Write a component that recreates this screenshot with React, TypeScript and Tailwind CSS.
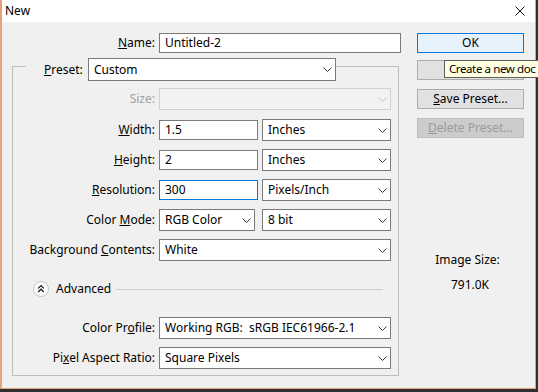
import React from "react";

function Chevron({ light }: { light?: boolean }) {
  return (
    <svg width="9" height="5" viewBox="0 0 9 5" className="shrink-0">
      <polyline
        points="0.5,0.5 4.5,4.5 8.5,0.5"
        fill="none"
        stroke={light ? "#c4c4c4" : "#3a3a3a"}
        strokeWidth="1"
      />
    </svg>
  );
}

function Select({
  className,
  children,
  disabled,
}: {
  className: string;
  children?: React.ReactNode;
  disabled?: boolean;
}) {
  return (
    <div
      className={
        "h-[22px] flex items-center justify-between pl-[5px] pr-[3px] border " +
        (disabled ? "bg-[#f2f2f2] border-[#d2d2d2] " : "bg-white border-[#7a7a7a] ") +
        className
      }
    >
      <span className="whitespace-nowrap">{children}</span>
      <Chevron light={disabled} />
    </div>
  );
}

function Input({
  className,
  children,
  focused,
}: {
  className: string;
  children?: React.ReactNode;
  focused?: boolean;
}) {
  return (
    <div
      className={
        "h-[20px] flex items-center pl-[5px] bg-white border " +
        (focused ? "border-[#0078d7] " : "border-[#7a7a7a] ") +
        className
      }
    >
      <span className="whitespace-nowrap">{children}</span>
    </div>
  );
}

function Label({ children, disabled }: { children: React.ReactNode; disabled?: boolean }) {
  return (
    <div
      className={
        "w-[142px] text-right whitespace-nowrap " + (disabled ? "text-[#a2a2a2]" : "text-black")
      }
    >
      {children}
    </div>
  );
}

function Btn({
  children,
  kind,
  className,
}: {
  children?: React.ReactNode;
  kind: "default" | "normal" | "disabled";
  className: string;
}) {
  const cls =
    kind === "default"
      ? "bg-[#e5f1fb] border-[#0078d7] text-black"
      : kind === "normal"
      ? "bg-[#e1e1e1] border-[#adadad] text-black"
      : "bg-[#cccccc] border-[#bfbfbf] text-[#9a9a9a]";
  return (
    <div
      className={
        "h-[20px] w-[107px] border flex items-center justify-center whitespace-nowrap " +
        cls +
        " " +
        className
      }
    >
      {children}
    </div>
  );
}

export default function App() {
  return (
    <div className="relative w-[538px] h-[392px] overflow-hidden bg-[#2f2f2f] font-['Noto_Sans',sans-serif] text-[12px] leading-[16px] text-black">
      <div className="w-[536px] h-[389px] flex flex-col bg-[#f0f0f0] border-l-2 border-r border-b border-[#e3a37f]">
        {/* Title bar */}
        <div className="h-[22px] bg-white flex items-center justify-between pl-[3px] pr-[10px]">
          <span className="text-[12px]">New</span>
          <svg width="10" height="10" viewBox="0 0 10 10">
            <line x1="0.5" y1="0.5" x2="9.5" y2="9.5" stroke="#111" strokeWidth="1" />
            <line x1="9.5" y1="0.5" x2="0.5" y2="9.5" stroke="#111" strokeWidth="1" />
          </svg>
        </div>

        {/* Body */}
        <div className="flex-1 flex">
          {/* Left column */}
          <div className="w-[415px] pt-[11px] flex flex-col">
            <div className="flex items-center h-[20px]">
              <div className="w-[153px] text-right">
                <u>N</u>ame:
              </div>
              <Input className="ml-[4px] w-[242px]">Untitled-2</Input>
            </div>

            {/* Group box */}
            <div className="mt-[13px] ml-[10px] w-[387px] h-[310px] border border-[#bdbdbd] flex flex-col">
              <div className="-mt-[9px] h-[23px] flex items-stretch">
                <div className="w-[13px]" />
                <div className="w-[62px] pl-[18px] bg-[#f0f0f0] flex items-center">
                  <span>
                    <u>P</u>reset:
                  </span>
                </div>
                <div className="w-[248px] h-[23px] flex items-center justify-between pl-[5px] pr-[3px] border bg-white border-[#7a7a7a]">
                  <span>Custom</span>
                  <Chevron />
                </div>
              </div>

              <div className="mt-[7px] h-[22px] flex items-center">
                <Label disabled>Size:</Label>
                <Select disabled className="ml-[4px] w-[232px]" />
              </div>

              <div className="mt-[9px] h-[22px] flex items-center">
                <Label>
                  <u>W</u>idth:
                </Label>
                <Input className="ml-[4px] w-[99px]">1.5</Input>
                <Select className="ml-[4px] w-[129px]">Inches</Select>
              </div>

              <div className="mt-[8px] h-[22px] flex items-center">
                <Label>
                  <u>H</u>eight:
                </Label>
                <Input className="ml-[4px] w-[99px]">2</Input>
                <Select className="ml-[4px] w-[129px]">Inches</Select>
              </div>

              <div className="mt-[8px] h-[22px] flex items-center">
                <Label>
                  <u>R</u>esolution:
                </Label>
                <Input focused className="ml-[4px] w-[99px]">
                  300
                </Input>
                <Select className="ml-[4px] w-[129px]">Pixels/Inch</Select>
              </div>

              <div className="mt-[8px] h-[22px] flex items-center">
                <Label>
                  Color <u>M</u>ode:
                </Label>
                <Select className="ml-[4px] w-[96px]">RGB Color</Select>
                <Select className="ml-[7px] w-[129px]">8 bit</Select>
              </div>

              <div className="mt-[8px] h-[22px] flex items-center">
                <Label>
                  Background <u>C</u>ontents:
                </Label>
                <Select className="ml-[4px] w-[232px]">White</Select>
              </div>

              <div className="mt-[20px] h-[16px] flex items-center">
                <svg width="16" height="16" viewBox="0 0 16 16" className="ml-[20px] shrink-0">
                  <circle cx="8" cy="8" r="7.5" fill="#fbfbfb" stroke="#c6c6c6" strokeWidth="1" />
                  <polyline points="5.2,7.4 8,4.6 10.8,7.4" fill="none" stroke="#1e1e1e" strokeWidth="1.3" />
                  <polyline points="5.2,11 8,8.2 10.8,11" fill="none" stroke="#1e1e1e" strokeWidth="1.3" />
                </svg>
                <span className="ml-[7px]">Advanced</span>
                <div className="flex-1 ml-[5px] mr-[15px] h-px bg-[#cdcdcd]" />
              </div>

              <div className="mt-[20px] h-[22px] flex items-center">
                <Label>
                  Color Pr<u>o</u>file:
                </Label>
                <Select className="ml-[4px] w-[232px]">Working RGB:&nbsp; sRGB IEC61966-2.1</Select>
              </div>

              <div className="mt-[8px] h-[22px] flex items-center">
                <Label>
                  Pi<u>x</u>el Aspect Ratio:
                </Label>
                <Select className="ml-[4px] w-[232px]">Square Pixels</Select>
              </div>
            </div>
          </div>

          {/* Right column */}
          <div className="w-[107px] pt-[11px] flex flex-col">
            <Btn kind="default" className="">
              OK
            </Btn>
            <Btn kind="normal" className="mt-[7px]" />
            <Btn kind="normal" className="mt-[9px]">
              <span>
                <u>S</u>ave Preset...
              </span>
            </Btn>
            <Btn kind="disabled" className="mt-[9px]">
              <span>
                <u>D</u>elete Preset...
              </span>
            </Btn>
            <div className="mt-[114px] text-center pr-[6px]">Image Size:</div>
            <div className="mt-[9px] text-center pr-[1px]">791.0K</div>
          </div>
        </div>
      </div>

      {/* Tooltip */}
      <div className="absolute left-[444px] top-[60px] w-[96px] h-[18px] pl-[4px] flex items-center bg-[#ffffe1] border border-[#5e5e5e] whitespace-nowrap text-[11.5px] tracking-[-0.4px]">
        Create a new doc
      </div>
    </div>
  );
}
